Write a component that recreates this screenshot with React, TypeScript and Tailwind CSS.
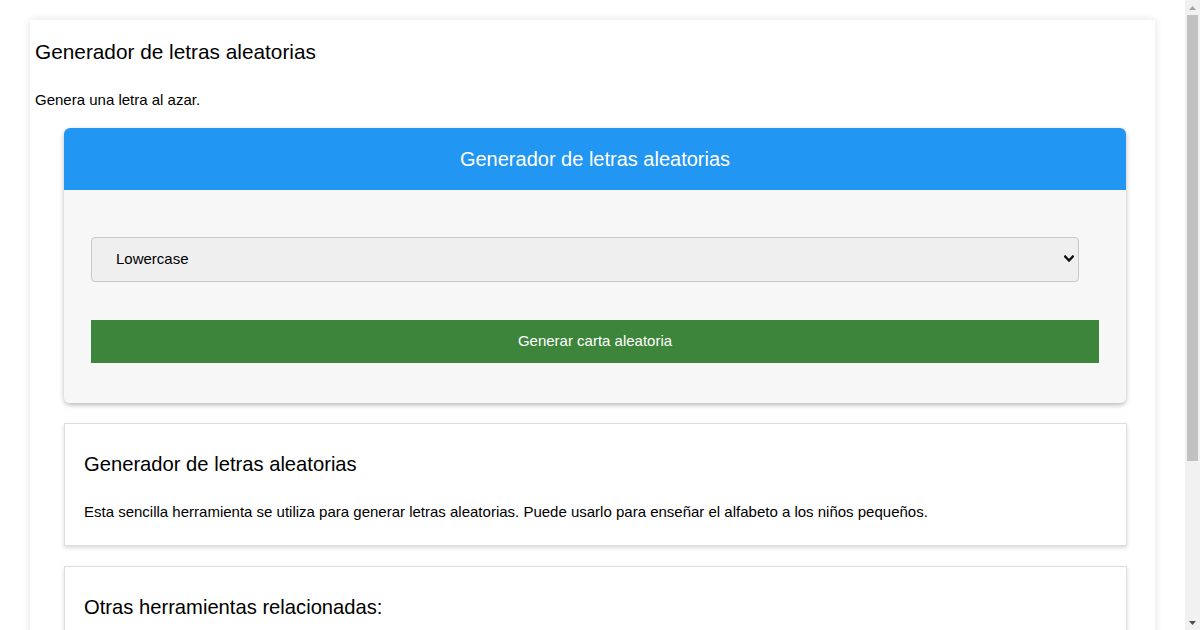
import React from "react";

export default function App() {
  return (
    <div className="flex h-screen w-full overflow-hidden bg-white" style={{ fontFamily: '"Liberation Sans", Arial, sans-serif' }}>
      <div className="flex-1 min-w-0 h-full overflow-hidden">
        <div className="mx-[30px] mt-[20px] bg-white px-[5px] pt-[20px] pb-[40px] shadow-[0_0_8px_rgba(0,0,0,0.12)] min-h-[700px]">
          <h1 className="text-[20.8px] leading-[24px] text-black font-normal">Generador de letras aleatorias</h1>
          <p className="mt-[27px] text-[15px] leading-[17px] text-black">Genera una letra al azar.</p>

          <div className="mt-[20px] ml-[29px] w-[1062px] rounded-[6px] overflow-hidden shadow-[0_2px_5px_rgba(0,0,0,0.28)]">
            <div className="h-[62px] bg-[#2196f3] flex items-center justify-center">
              <span className="text-white text-[20px] leading-[23px]">Generador de letras aleatorias</span>
            </div>
            <div className="bg-[#f7f7f7] px-[27px] pt-[47px] pb-[40px]">
              <div className="relative w-[988px]">
                <select
                  defaultValue="lowercase"
                  className="appearance-none w-full h-[45px] bg-[#efefef] border border-[#c8c8c8] rounded-[4px] pl-[24px] pr-[30px] text-[15px] text-black outline-none"
                  style={{ fontFamily: '"Liberation Sans", Arial, sans-serif' }}
                >
                  <option value="lowercase">Lowercase</option>
                  <option value="uppercase">Uppercase</option>
                </select>
                <svg className="pointer-events-none absolute right-[5px] top-[18px]" width="10" height="8" viewBox="0 0 10 8">
                  <path d="M1.2 1.6 L5 5.6 L8.8 1.6" fill="none" stroke="#111" strokeWidth="2.4" strokeLinecap="square" />
                </svg>
              </div>
              <button className="mt-[38px] w-full h-[43px] bg-[#3c853a] text-white text-[15px] flex items-center justify-center">
                Generar carta aleatoria
              </button>
            </div>
          </div>

          <div className="mt-[20px] ml-[29px] w-[1063px] bg-white border border-[#dedede] shadow-[0_2px_4px_rgba(0,0,0,0.15)] px-[19px] pt-[29px] pb-[25px]">
            <h2 className="text-[20.2px] leading-[23px] text-black font-normal">Generador de letras aleatorias</h2>
            <p className="mt-[27px] text-[15px] leading-[17px] text-black">
              Esta sencilla herramienta se utiliza para generar letras aleatorias. Puede usarlo para enseñar el alfabeto a los niños pequeños.
            </p>
          </div>

          <div className="mt-[20px] ml-[29px] w-[1063px] h-[200px] bg-white border border-[#dedede] shadow-[0_2px_4px_rgba(0,0,0,0.15)] px-[19px] pt-[29px]">
            <h2 className="text-[20.2px] leading-[23px] text-black font-normal">Otras herramientas relacionadas:</h2>
          </div>
        </div>
      </div>

      <div className="w-[15px] h-full bg-[#f1f1f1] flex flex-col items-center shrink-0">
        <div className="h-[15px] w-full flex items-center justify-center">
          <svg width="7" height="4" viewBox="0 0 7 4"><path d="M0 4 L3.5 0 L7 4 Z" fill="#a3a3a3" /></svg>
        </div>
        <div className="w-[11px] h-[446px] bg-[#c1c1c1]" />
        <div className="flex-1" />
        <div className="h-[15px] w-full flex items-center justify-center">
          <svg width="7" height="4" viewBox="0 0 7 4"><path d="M0 0 L7 0 L3.5 4 Z" fill="#505050" /></svg>
        </div>
      </div>
    </div>
  );
}
